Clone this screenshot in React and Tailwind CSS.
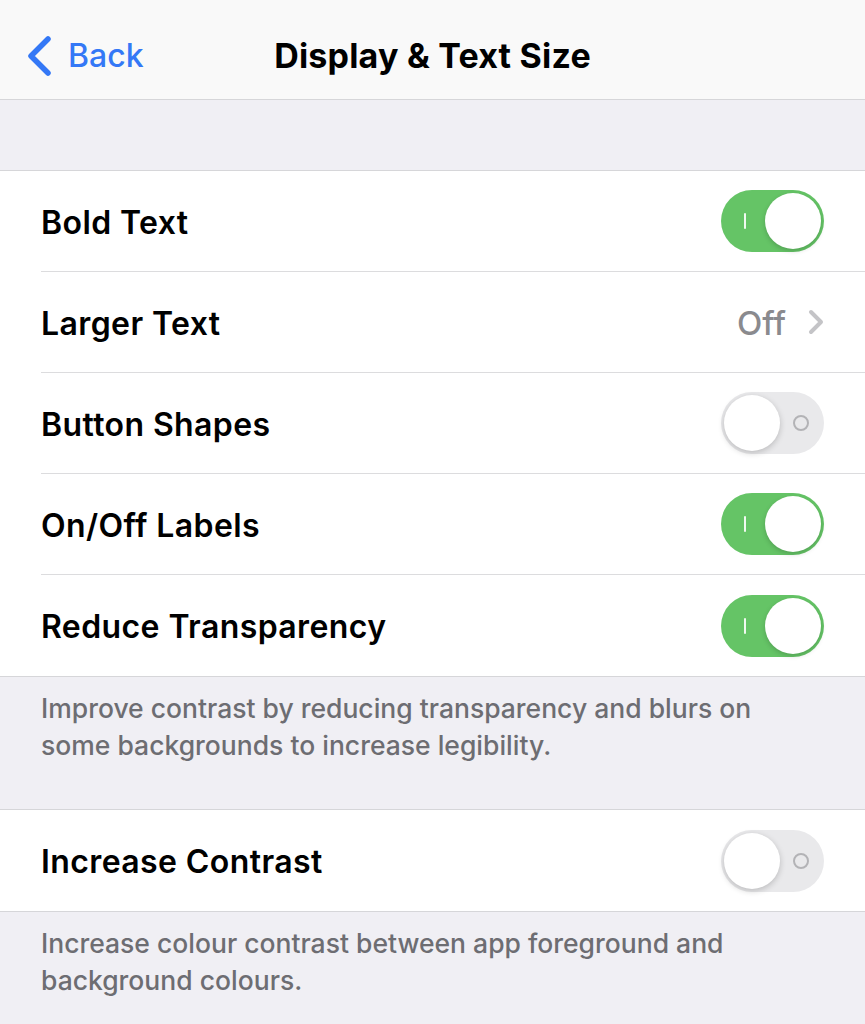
import React from "react";

const font = { fontFamily: "Inter, 'Noto Sans', 'Liberation Sans', sans-serif" };

function Toggle({ on }) {
  if (on) {
    return (
      <div className="relative h-[62px] w-[103px] shrink-0 rounded-full bg-[#65c466]">
        <div className="absolute left-[23px] top-[23px] h-[16px] w-[2px] rounded-full bg-white/90" />
        <div className="absolute right-[3px] top-[3px] h-[56px] w-[56px] rounded-full bg-white shadow-[0_2px_5px_rgba(0,0,0,0.18)]" />
      </div>
    );
  }
  return (
    <div className="relative h-[62px] w-[103px] shrink-0 rounded-full bg-[#e9e9eb]">
      <div className="absolute right-[15px] top-[23px] h-[16px] w-[16px] rounded-full border-2 border-[#b3b3b6]" />
      <div className="absolute left-[3px] top-[3px] h-[56px] w-[56px] rounded-full bg-white shadow-[0_2px_6px_rgba(0,0,0,0.2)]" />
    </div>
  );
}

function Row({ label, children, last }) {
  return (
    <div className="pl-[41px]">
      <div
        className={
          "flex h-[101px] items-center justify-between pr-[41px] " +
          (last ? "" : "border-b border-[#dcdcde]")
        }
      >
        <span className="pt-[3px] text-[32px] font-semibold tracking-[0.4px] text-black">{label}</span>
        {children}
      </div>
    </div>
  );
}

function Footer({ lines, className }) {
  return (
    <div className={"bg-[#f0eff4] px-[41px] " + className}>
      {lines.map((t) => (
        <p key={t} className="text-[26.5px] font-medium leading-[37px] text-[#6d6d72]">
          {t}
        </p>
      ))}
    </div>
  );
}

export default function App() {
  return (
    <div style={font} className="h-[1024px] w-[865px] overflow-hidden bg-[#f0eff4]">
      <header className="grid h-[100px] grid-cols-[1fr_auto_1fr] items-center border-b border-[#d6d6d9] bg-[#f9f9f9] pt-[12px]">
        <div className="flex items-center gap-[14px] pl-[24px]">
          <svg width="30" height="42" viewBox="0 0 30 42" fill="none">
            <path
              d="M24 4 L7 21 L24 38"
              stroke="#3478f6"
              strokeWidth="5.5"
              strokeLinecap="round"
              strokeLinejoin="round"
            />
          </svg>
          <span className="text-[32px] font-medium text-[#3478f6]">Back</span>
        </div>
        <h1 className="text-[34px] font-bold tracking-[0.2px] text-black">Display &amp; Text Size</h1>
        <div />
      </header>

      <div className="h-[70px]" />

      <section className="border-y border-[#d6d6d9] bg-white">
        <Row label="Bold Text">
          <Toggle on />
        </Row>
        <Row label="Larger Text">
          <div className="flex items-center gap-[22px]">
            <span className="pt-[3px] text-[33px] font-medium text-[#8a8a8e]">Off</span>
            <svg width="16" height="26" viewBox="0 0 16 26" fill="none">
              <path
                d="M3 3 L13 13 L3 23"
                stroke="#c4c4c7"
                strokeWidth="4"
                strokeLinecap="round"
                strokeLinejoin="round"
              />
            </svg>
          </div>
        </Row>
        <Row label="Button Shapes">
          <Toggle />
        </Row>
        <Row label="On/Off Labels">
          <Toggle on />
        </Row>
        <Row label="Reduce Transparency" last>
          <Toggle on />
        </Row>
      </section>

      <Footer
        className="h-[132px] pt-[13px]"
        lines={[
          "Improve contrast by reducing transparency and blurs on",
          "some backgrounds to increase legibility.",
        ]}
      />

      <section className="border-y border-[#d6d6d9] bg-white">
        <Row label="Increase Contrast" last>
          <Toggle />
        </Row>
      </section>

      <Footer
        className="pt-[13px]"
        lines={["Increase colour contrast between app foreground and", "background colours."]}
      />
    </div>
  );
}
